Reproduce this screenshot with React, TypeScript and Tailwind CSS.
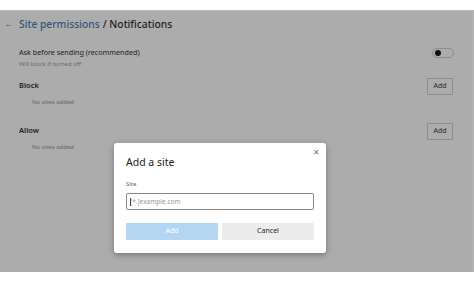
import React from "react";

export default function App() {
  const font = { fontFamily: '"Noto Sans", "Open Sans", sans-serif' };
  return (
    <div className="relative w-[474px] h-[284px] bg-white overflow-hidden" style={font}>
      <div className="h-[10px] bg-white" />
      <div className="relative h-[262px] bg-[#acacac] border-t border-[#b8b8b8] flex">
        <div className="flex-1 flex flex-col pl-[4px] pr-[19px]">
          {/* header */}
          <div className="h-[25px] flex items-center">
            <span className="text-[9px] text-[#4b6788] w-[15px] leading-none">←</span>
            <span className="text-[10.3px] leading-[14px] font-medium text-[#35557a]">Site permissions</span>
            <span className="text-[10.3px] leading-[14px] font-medium text-[#1f1f1f] ml-[3px]">/ Notifications</span>
          </div>
          {/* ask before sending */}
          <div className="flex items-start justify-between mt-[11px] pl-[15px]">
            <div className="flex flex-col">
              <span className="text-[7.2px] leading-[11px] text-[#1e1e1e]">Ask before sending (recommended)</span>
              <span className="mt-[0.5px] text-[6px] leading-[10px] text-[#6a6a6a]">Will block if turned off</span>
            </div>
            <div className="mt-[1px] mr-[-1px] w-[22px] h-[10px] rounded-full border border-[#8c8c8c] flex items-center pl-[2px]">
              <div className="w-[6px] h-[6px] rounded-full bg-[#111]" />
            </div>
          </div>
          {/* block */}
          <div className="flex items-center justify-between mt-[9px] pl-[15px] h-[17px]">
            <span className="text-[7.5px] font-semibold text-[#1e1e1e]">Block</span>
            <div className="w-[26px] h-[17px] border border-[#8e8e8e] flex items-center justify-center text-[7px] text-[#2a2a2a]">Add</div>
          </div>
          <div className="pl-[28px] mt-[2px] text-[6px] leading-[10px] text-[#686868]">No sites added</div>
          {/* allow */}
          <div className="flex items-center justify-between mt-[16px] pl-[15px] h-[17px]">
            <span className="text-[7.5px] font-semibold text-[#1e1e1e]">Allow</span>
            <div className="w-[26px] h-[17px] border border-[#8e8e8e] flex items-center justify-center text-[7px] text-[#2a2a2a]">Add</div>
          </div>
          <div className="pl-[28px] mt-[2px] text-[6px] leading-[10px] text-[#686868]">No sites added</div>
        </div>
        <div className="w-[2px] bg-[#b3b3b3]" />
      </div>
      <div className="h-[12px] bg-white" />

      {/* dialog */}
      <div className="absolute left-[114px] top-[143px] w-[212px] h-[110px] bg-white rounded-[3px] shadow-[0_2px_6px_rgba(0,0,0,0.3)] flex flex-col px-[12px]">
        <div className="absolute right-[6px] top-[5px] text-[8px] leading-none text-[#777]">✕</div>
        <div className="mt-[12px] text-[10.5px] leading-[14px] text-[#1a1a1a]">Add a site</div>
        <div className="mt-[11px] text-[6px] leading-[8px] text-[#666]">Site</div>
        <div className="relative mt-[5px] h-[17px] border border-[#8a8a8a] rounded-[2px] flex items-center px-[3px] text-[6.5px] text-[#9a9a9a]">
          <div className="absolute left-[3px] top-[4px] w-[1px] h-[8px] bg-[#444]" />
          [*.]example.com
        </div>
        <div className="mt-[13px] flex gap-[4px]">
          <div className="flex-1 h-[17px] bg-[#b3d6f2] rounded-[1px] flex items-center justify-center text-[7px] text-white">Add</div>
          <div className="flex-1 h-[17px] bg-[#ececec] rounded-[1px] flex items-center justify-center text-[7px] text-[#1f1f1f]">Cancel</div>
        </div>
      </div>
    </div>
  );
}
